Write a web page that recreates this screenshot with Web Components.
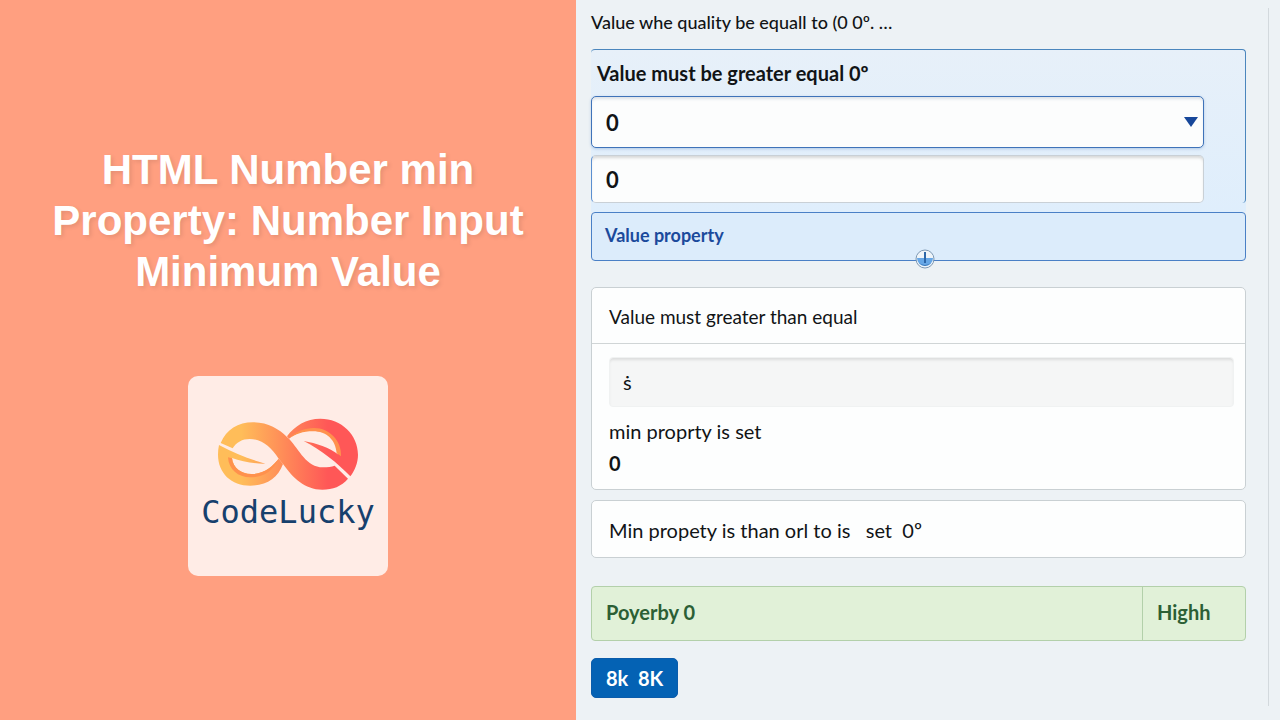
<!DOCTYPE html>
<html lang="en">
<head>
  <meta charset="UTF-8">
  <meta name="viewport" content="width=device-width, initial-scale=1.0">
  <title>HTML Number min Property: Number Input Minimum Value</title>
  <style>
    body {
      margin: 0;
      font-family: Lato, "Liberation Sans", sans-serif;
      color: #111416;
    }
  </style>
</head>
<body>
  <cover-page></cover-page>

  <script>
    class CoverPage extends HTMLElement {
      constructor() {
        super();
        this.attachShadow({ mode: "open" });
      }

      connectedCallback() {
        this.render();
      }

      render() {
        this.shadowRoot.innerHTML = `
          <style>
            :host {
              display: grid;
              grid-template-columns: 45% 1fr;
              min-height: 100vh;
            }
          </style>

          <title-panel>
            HTML Number min Property: Number Input Minimum Value
            <code-logo slot="logo"></code-logo>
          </title-panel>
          <form-panel></form-panel>
        `;
      }
    }

    class TitlePanel extends HTMLElement {
      constructor() {
        super();
        this.attachShadow({ mode: "open" });
      }

      connectedCallback() {
        this.shadowRoot.innerHTML = `
          <style>
            :host {
              display: flex;
              flex-direction: column;
              align-items: center;
              justify-content: center;
              gap: 79px;
              padding: 0 40px;
              background-color: #ff9f80;
            }

            h1 {
              margin: 0;
              font-family: "Liberation Sans", Arial, sans-serif;
              font-size: 42px;
              line-height: 51px;
              font-weight: bold;
              text-align: center;
              color: #ffffff;
              text-shadow: 2px 2px 4px rgba(0, 0, 0, 0.1);
            }
          </style>

          <h1><slot></slot></h1>
          <slot name="logo"></slot>
        `;
      }
    }

    class CodeLogo extends HTMLElement {
      constructor() {
        super();
        this.attachShadow({ mode: "open" });
      }

      connectedCallback() {
        this.shadowRoot.innerHTML = `
          <style>
            :host {
              display: flex;
              flex-direction: column;
              align-items: center;
              justify-content: center;
              box-sizing: border-box;
              width: 200px;
              height: 200px;
              border-radius: 10px;
              background-color: #ffece6;
            }

            svg {
              display: block;
              width: 140px;
              height: 72px;
            }

            span {
              font-family: "DejaVu Sans Mono", monospace;
              font-size: 32px;
              line-height: 44px;
              color: #17406d;
            }
          </style>

          <svg viewBox="90 125 420 216" aria-hidden="true">
            <defs>
              <linearGradient id="flame" gradientUnits="userSpaceOnUse" x1="160" y1="0" x2="420" y2="0">
                <stop offset="0" stop-color="#ffbd59"/>
                <stop offset="1" stop-color="#ff5757"/>
              </linearGradient>
            </defs>
            <g fill="url(#flame)">
              <path d="M98 200C115 160 150 138 195 138C240 138 272 158 297 182L303 187C335 222 355 272 405 273C420 273 430 271 440 268L480 307C460 330 435 340 403 340C350 340 315 305 285 263L272 247C250 215 225 188 185 188C163 188 145 198 134 216Z"/>
              <path d="M93 206C140 232 190 250 232 262C200 263 160 255 132 245C135 275 160 293 190 293C230 293 255 268 272 247L285 263C270 305 235 328 187 328C130 328 90 290 90 235C90 225 91 215 93 206Z"/>
              <path d="M297 180C320 148 355 127 397 127C460 127 510 175 510 235C510 260 500 283 487 300C450 262 400 220 347 194C385 200 425 215 450 234C450 190 425 162 375 162C345 162 322 172 303 187Z"/>
            </g>
            <g fill="#ff914d">
              <path d="M120 243L132 246C135 275 160 293 190 293C230 293 255 268 272 247C255 285 225 303 187 303C150 303 122 280 120 243Z"/>
              <path d="M303 187C322 166 350 155 378 155C425 155 462 195 459 240L446 231C443 190 415 165 375 165C345 165 322 173 303 187Z"/>
            </g>
          </svg>
          <span>CodeLucky</span>
        `;
      }
    }

    class FormPanel extends HTMLElement {
      constructor() {
        super();
        this.attachShadow({ mode: "open" });
      }

      connectedCallback() {
        this.shadowRoot.innerHTML = `
          <style>
            :host {
              display: grid;
              grid-template-columns: 1fr 23px;
              padding: 8px 11px 14px 15px;
              background-color: #edf2f5;
            }

            .content {
              display: flex;
              flex-direction: column;
            }

            .rail {
              justify-self: end;
              width: 1px;
              background-color: #d3d9dd;
            }

            .hint {
              margin: 0 0 13px;
              font-size: 18px;
              line-height: 28px;
              font-weight: 500;
            }

            .stack {
              display: flex;
              flex-direction: column;
              gap: 10px;
              margin: 26px 0 28px;
            }

            .text {
              margin: 0;
              font-size: 20px;
              line-height: 32px;
              white-space: pre-wrap;
            }

            .text.strong {
              font-weight: bold;
            }

            input {
              display: block;
              box-sizing: border-box;
              width: 100%;
              height: 50px;
              margin: 0 0 8px;
              padding: 0 13px;
              border: 1px solid #f0f2f2;
              border-radius: 4px;
              background-color: #f5f6f6;
              box-shadow: inset 0 3px 3px -1px rgba(0, 0, 0, 0.1);
              font: inherit;
              font-size: 20px;
              color: inherit;
            }

            button {
              align-self: flex-start;
              height: 40px;
              margin-top: 17px;
              padding: 0 14px;
              border: 1px solid #0b5cab;
              border-radius: 5px;
              background-color: #0462b4;
              font: bold 20px Lato, sans-serif;
              color: #ffffff;
              white-space: pre;
            }
          </style>

          <div class="content">
            <p class="hint">Value whe quality be equall to (0 0º. …</p>
            <number-group></number-group>
            <property-bar>Value property</property-bar>
            <div class="stack">
              <info-card>
                <span slot="header">Value must greater than equal</span>
                <input type="text" value="ṡ" aria-label="min value">
                <p class="text">min proprty is set</p>
                <p class="text strong">0</p>
              </info-card>
              <info-card>
                <span slot="header" class="text">Min propety is than orl to is   set  0º</span>
              </info-card>
            </div>
            <status-bar>
              Poyerby 0
              <span slot="level">Highh</span>
            </status-bar>
            <button type="button">8k  8K</button>
          </div>
          <div class="rail"></div>
        `;
      }
    }

    class NumberGroup extends HTMLElement {
      constructor() {
        super();
        this.attachShadow({ mode: "open" });
      }

      connectedCallback() {
        this.shadowRoot.innerHTML = `
          <style>
            :host {
              display: block;
              padding-bottom: 9px;
              border-radius: 4px 4px 0 0;
              background: linear-gradient(#e7f0f9, #dfeefc);
            }

            .group {
              display: flex;
              flex-direction: column;
              gap: 7px;
              padding-right: 41px;
              border-top: 1px solid #4b86bd;
              border-right: 1px solid #4b86bd;
              border-radius: 4px;
            }

            label {
              padding: 7px 6px 0;
              font-size: 20px;
              line-height: 32px;
              font-weight: bold;
            }

            .picker {
              display: grid;
              align-items: center;
            }

            .picker > * {
              grid-area: 1 / 1;
            }

            .picker svg {
              justify-self: end;
              width: 14px;
              height: 10px;
              margin-right: 6px;
              pointer-events: none;
            }

            select,
            input {
              appearance: none;
              box-sizing: border-box;
              width: 100%;
              height: 52px;
              padding: 0 14px;
              border: 1px solid #3f73b9;
              border-radius: 5px;
              background-color: #fcfdfd;
              box-shadow: inset 0 3px 3px -1px rgba(40, 70, 110, 0.15), 0 1px 3px rgba(63, 115, 185, 0.3);
              font: bold 22px Lato, sans-serif;
              color: #111416;
            }

            input {
              height: 48px;
              border-color: #c9d0d6;
              border-left-color: #5b8fd0;
              box-shadow: inset 0 3px 3px -1px rgba(0, 0, 0, 0.15);
            }
          </style>

          <div class="group">
            <label for="minimum">Value must be greater equal 0º</label>
            <div class="picker">
              <select id="minimum"><option>0</option></select>
              <svg viewBox="0 0 14 10" aria-hidden="true"><path d="M0 0H14L7 10Z" fill="#17479a"/></svg>
            </div>
            <input type="text" inputmode="numeric" value="0" aria-label="Number">
          </div>
        `;
      }
    }

    class PropertyBar extends HTMLElement {
      constructor() {
        super();
        this.attachShadow({ mode: "open" });
      }

      connectedCallback() {
        this.shadowRoot.innerHTML = `
          <style>
            :host {
              display: block;
              position: relative;
              padding: 7px 13px 9px;
              border: 1px solid #4a80c6;
              border-radius: 4px;
              background-color: #dcecfb;
              font-size: 18px;
              line-height: 31px;
              font-weight: bold;
              color: #1b4a9c;
            }

            /* marker sitting on the lower edge */
            svg {
              position: absolute;
              left: calc(50% - 4px);
              bottom: -9px;
              width: 20px;
              height: 20px;
            }
          </style>

          <slot></slot>
          <svg viewBox="0 0 20 20" aria-hidden="true">
            <circle cx="10" cy="10" r="9" fill="#eef4f9" stroke="#7d98b3"/>
            <path d="M2 9H18A8 8 0 0 1 2 9Z" fill="#67a7e6"/>
            <path d="M4 14A8 8 0 0 0 16 14A8 6 0 0 1 4 14Z" fill="#2c66a8"/>
            <path d="M10 3V14" stroke="#2c66a8" stroke-width="2"/>
          </svg>
        `;
      }
    }

    class InfoCard extends HTMLElement {
      constructor() {
        super();
        this.attachShadow({ mode: "open" });
      }

      connectedCallback() {
        // the body only exists when something is passed in besides the header
        const hasBody = [...this.children].some((child) => child.slot !== "header");

        this.shadowRoot.innerHTML = `
          <style>
            :host {
              display: block;
              border: 1px solid #c9d0d3;
              border-radius: 5px;
              background-color: #fdfefe;
            }

            header {
              padding: 13px 17px 10px;
              font-size: 19px;
              line-height: 32px;
            }

            .body {
              padding: 13px 11px 10px 17px;
              border-top: 1px solid #d0d5d6;
            }
          </style>

          <header><slot name="header"></slot></header>
          ${hasBody ? `<div class="body"><slot></slot></div>` : ""}
        `;
      }
    }

    class StatusBar extends HTMLElement {
      constructor() {
        super();
        this.attachShadow({ mode: "open" });
      }

      connectedCallback() {
        this.shadowRoot.innerHTML = `
          <style>
            :host {
              display: grid;
              grid-template-columns: 1fr 103px;
              border: 1px solid #b3d0aa;
              border-radius: 4px;
              background-color: #e1f1d8;
              font-size: 20px;
              line-height: 31px;
              font-weight: bold;
              color: #2c5f35;
            }

            div {
              padding: 10px 14px 12px;
            }

            .level {
              border-left: 1px solid #b3d0aa;
            }
          </style>

          <div><slot></slot></div>
          <div class="level"><slot name="level"></slot></div>
        `;
      }
    }

    customElements.define("title-panel", TitlePanel);
    customElements.define("code-logo", CodeLogo);
    customElements.define("number-group", NumberGroup);
    customElements.define("property-bar", PropertyBar);
    customElements.define("info-card", InfoCard);
    customElements.define("status-bar", StatusBar);
    customElements.define("form-panel", FormPanel);
    customElements.define("cover-page", CoverPage);
  </script>
</body>
</html>
